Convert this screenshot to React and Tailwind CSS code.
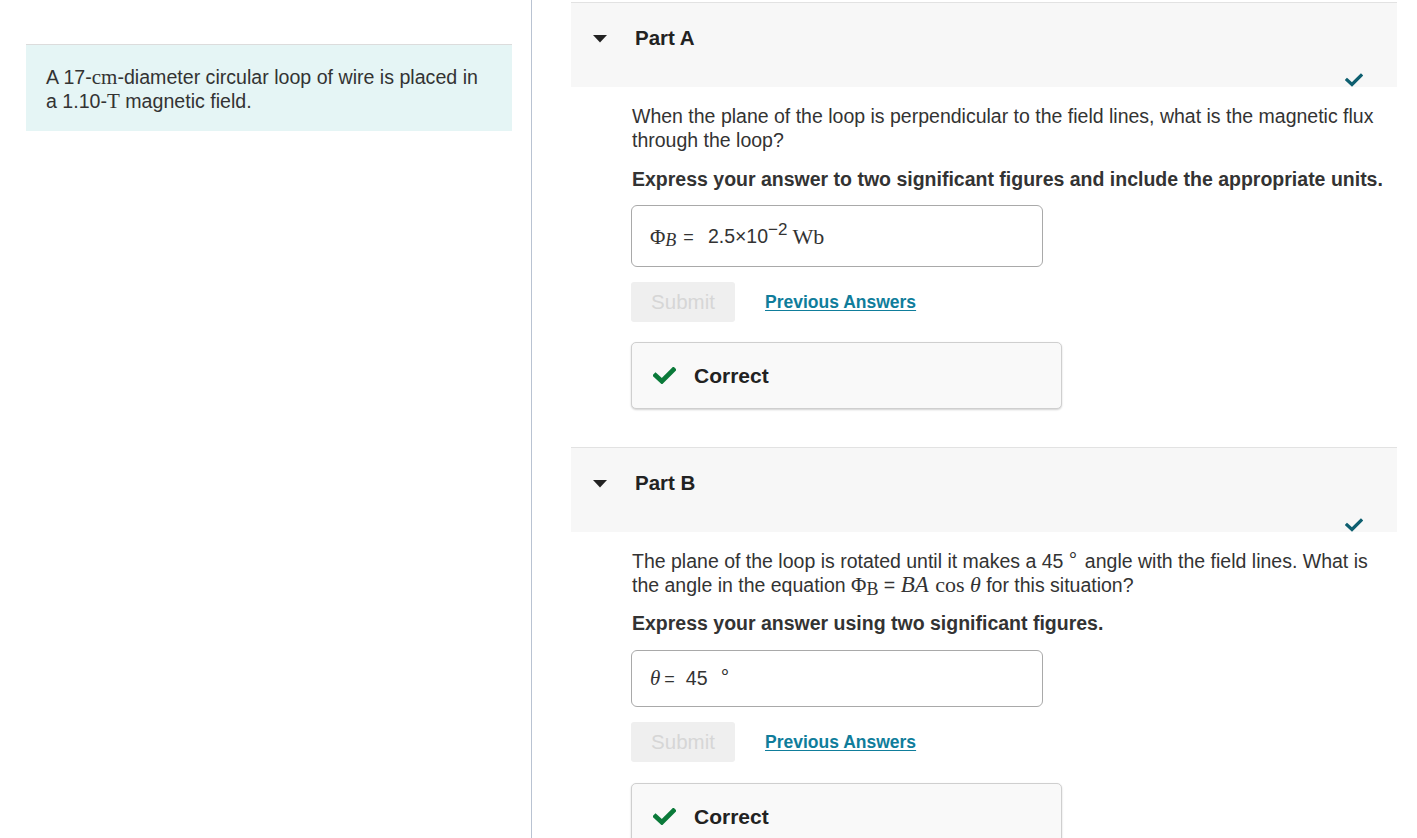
import React from "react";

const serif = { fontFamily: '"Liberation Serif", "Times New Roman", serif' };

function Check({ w, h, color, sw }) {
  return (
    <svg width={w} height={h} viewBox="0 0 22 16" fill="none">
      <polyline points="2.5,8 8.5,13.5 19.5,2.5" stroke={color} strokeWidth={sw} strokeLinecap="square" strokeLinejoin="miter" />
    </svg>
  );
}

function Header({ title }) {
  return (
    <div className="bg-[#f7f7f7] border-t border-[#e2e2e2] h-[85px] flex flex-col">
      <div className="flex items-center h-[71px] pl-[22px]">
        <svg width="14" height="8" viewBox="0 0 14 8" className="mt-[1px]">
          <polygon points="0,0 14,0 7,7.5" fill="#222" />
        </svg>
        <span className="ml-[28px] text-[20.5px] font-bold text-[#222]">{title}</span>
      </div>
      <div className="flex justify-end pr-[34px]">
        <Check w={18} h={14} color="#0e5f70" sw={4} />
      </div>
    </div>
  );
}

function SubmitRow() {
  return (
    <div className="flex items-center mt-[15px] ml-[-1px]">
      <div className="w-[104px] h-[40px] bg-[#efefef] rounded-[3px] flex items-center justify-center text-[20.5px] text-[#d6d6d6]">
        Submit
      </div>
      <a className="ml-[30px] text-[17.5px] font-bold text-[#0f7d9b] underline underline-offset-[2px]">Previous Answers</a>
    </div>
  );
}

function Correct({ mt }) {
  return (
    <div
      className={`ml-[-1px] w-[431px] h-[67px] bg-[#f9f9f9] border border-[#cfcfcf] rounded-[5px] shadow-[0_1px_2px_rgba(0,0,0,0.18)] flex items-center pl-[21px] ${mt}`}
    >
      <Check w={23} h={17} color="#0b7a3a" sw={4.5} />
      <span className="ml-[18px] text-[21px] font-bold text-[#222]">Correct</span>
    </div>
  );
}

export default function App() {
  return (
    <div
      className="w-[1417px] h-[838px] overflow-hidden bg-white flex text-[#333]"
      style={{ fontFamily: '"Liberation Sans", Arial, sans-serif' }}
    >
      <div className="w-[532px] shrink-0 border-r border-[#b9c3d2] pt-[44px] pl-[26px]">
        <div className="w-[486px] h-[87px] bg-[#e5f5f5] border-t border-[#dcdcdc] pt-[20px] pl-[20px] text-[19.6px] leading-[24px] text-[#333]">
          A 17-<span style={serif} className="text-[21px] leading-[0]">cm</span>-diameter circular loop of wire is placed in
          <br />a 1.10-<span style={serif} className="text-[21px] leading-[0]">T</span> magnetic field.
        </div>
      </div>

      <div className="flex-1 pl-[39px] pr-[20px] pt-[2px]">
        <Header title="Part A" />
        <div className="pl-[61px] pt-[17px] text-[19.5px] leading-[24px]">
          <p>
            When the plane of the loop is perpendicular to the field lines, what is the magnetic flux
            <br />
            through the loop?
          </p>
          <p className="font-bold mt-[15px]">Express your answer to two significant figures and include the appropriate units.</p>
          <div className="mt-[14px] ml-[-1px] w-[412px] h-[62px] border border-[#a9a9a9] rounded-[6px] flex items-center pl-[18px] pt-[2px] leading-none">
            <span style={serif} className="text-[21px]">Φ</span>
            <span style={serif} className="italic text-[18px] relative top-[3px]">B</span>
            <span className="ml-[7px] text-[18px]">=</span>
            <span className="ml-[14px] text-[19.5px]">2.5×10</span>
            <span className="text-[17px] relative top-[-8px]">−2</span>
            <span style={serif} className="ml-[5px] text-[22px]">Wb</span>
          </div>
          <SubmitRow />
          <Correct mt="mt-[20px]" />
        </div>

        <div className="mt-[38px]">
          <Header title="Part B" />
        </div>
        <div className="pl-[61px] pt-[17px] text-[19.5px] leading-[24px]">
          <p>
            The plane of the loop is rotated until it makes a 45
            <span className="relative top-[-7px] text-[19px] ml-[4px] leading-[0]">∘</span> angle with the field lines. What is
            <br />
            the angle in the equation <span style={serif} className="text-[21px] leading-[0]">Φ</span>
            <span style={serif} className="text-[18px] relative top-[3px] leading-[0]">B</span> ={" "}
            <span style={serif} className="italic text-[23px] leading-[0]">BA</span>{" "}
            <span style={serif} className="text-[22px] leading-[0] ml-[1px]">cos</span>{" "}
            <span style={serif} className="italic text-[22px] leading-[0]">θ</span> for this situation?
          </p>
          <p className="font-bold mt-[14px]">Express your answer using two significant figures.</p>
          <div className="mt-[15px] ml-[-1px] w-[412px] h-[57px] border border-[#a9a9a9] rounded-[6px] flex items-center pl-[18px] leading-none">
            <span style={serif} className="italic text-[21px]">θ</span>
            <span className="ml-[4px] text-[18px]">=</span>
            <span className="ml-[11px] text-[19.5px]">45</span>
            <span className="ml-[11px] text-[19px] relative top-[-7px]">∘</span>
          </div>
          <SubmitRow />
          <Correct mt="mt-[21px]" />
        </div>
      </div>
    </div>
  );
}
